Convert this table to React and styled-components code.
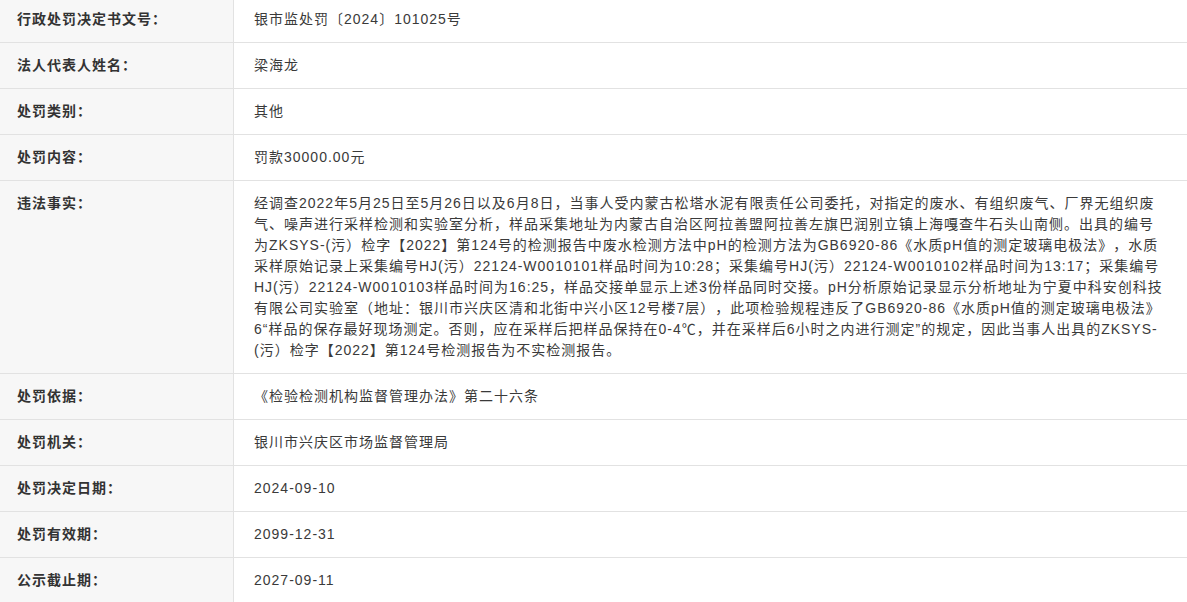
import styled, { createGlobalStyle } from "styled-components";

const rows = [
  { label: "行政处罚决定书文号：", value: "银市监处罚〔2024〕101025号" },
  { label: "法人代表人姓名：", value: "梁海龙" },
  { label: "处罚类别：", value: "其他" },
  { label: "处罚内容：", value: "罚款30000.00元" },
  {
    label: "违法事实：",
    value:
      "经调查2022年5月25日至5月26日以及6月8日，当事人受内蒙古松塔水泥有限责任公司委托，对指定的废水、有组织废气、厂界无组织废气、噪声进行采样检测和实验室分析，样品采集地址为内蒙古自治区阿拉善盟阿拉善左旗巴润别立镇上海嘎查牛石头山南侧。出具的编号为ZKSYS-(污）检字【2022】第124号的检测报告中废水检测方法中pH的检测方法为GB6920-86《水质pH值的测定玻璃电极法》，水质采样原始记录上采集编号HJ(污）22124-W0010101样品时间为10:28；采集编号HJ(污）22124-W0010102样品时间为13:17；采集编号HJ(污）22124-W0010103样品时间为16:25，样品交接单显示上述3份样品同时交接。pH分析原始记录显示分析地址为宁夏中科安创科技有限公司实验室（地址：银川市兴庆区清和北街中兴小区12号楼7层），此项检验规程违反了GB6920-86《水质pH值的测定玻璃电极法》6“样品的保存最好现场测定。否则，应在采样后把样品保持在0-4℃，并在采样后6小时之内进行测定”的规定，因此当事人出具的ZKSYS-(污）检字【2022】第124号检测报告为不实检测报告。",
  },
  { label: "处罚依据：", value: "《检验检测机构监督管理办法》第二十六条" },
  { label: "处罚机关：", value: "银川市兴庆区市场监督管理局" },
  { label: "处罚决定日期：", value: "2024-09-10" },
  { label: "处罚有效期：", value: "2099-12-31" },
  { label: "公示截止期：", value: "2027-09-11" },
];

function App() {
  return (
    <>
      <GlobalStyle />
      <Table>
        {rows.map((row) => (
          <Row key={row.label}>
            <Label>{row.label}</Label>
            <Value>{row.value}</Value>
          </Row>
        ))}
      </Table>
    </>
  );
}

export default App;

const GlobalStyle = createGlobalStyle`
  body {
    margin: 0;
    background: #fff;
    font-family: "Liberation Sans", "Noto Sans CJK SC", sans-serif;
  }
`;

const Table = styled.div`
  width: 1187px;
  margin-top: -3px;
  display: flex;
  flex-direction: column;
`;

const Row = styled.div`
  display: grid;
  grid-template-columns: 234px 1fr;
  border-bottom: 1px solid #e2e2e2;
`;

const Label = styled.div`
  background: #f7f7f7;
  border-right: 1px solid #e2e2e2;
  padding: 12px 17px;
  font-size: 14px;
  line-height: 21px;
  font-weight: bold;
  color: #333;
  letter-spacing: 1px;
  text-spacing-trim: space-all;
`;

const Value = styled.div`
  padding: 12px 20px;
  font-size: 14px;
  line-height: 21px;
  color: #3a3a3a;
  letter-spacing: 1px;
  text-spacing-trim: space-all;
`;
